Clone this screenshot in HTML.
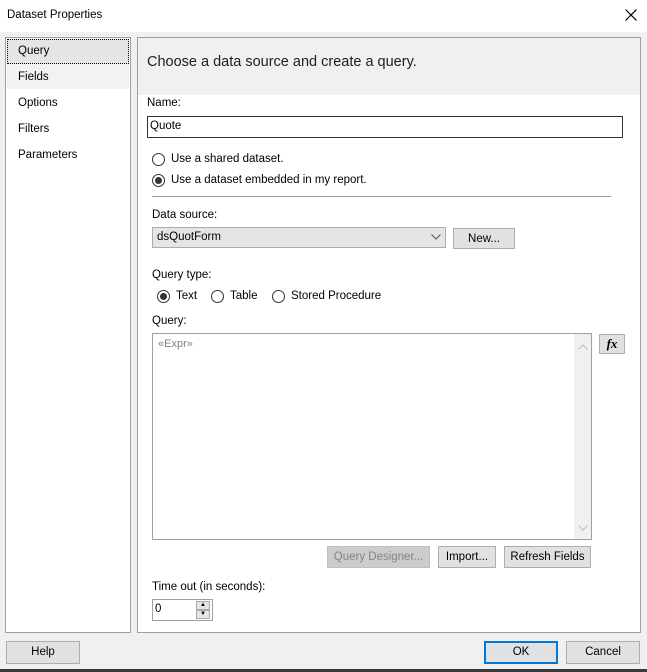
<!DOCTYPE html><html><head><style>
*{box-sizing:border-box}
body{margin:0;width:647px;height:672px;background:#f0f0f0;font-family:"Liberation Sans",sans-serif;font-size:11.5px;color:#000;position:relative;overflow:hidden}
.a{position:absolute}
.btn{position:absolute;background:#e1e1e1;border:1px solid #adadad;text-align:center;line-height:20px;font-size:11.5px}
.rad{position:absolute;width:13px;height:13px;border:1px solid #333;border-radius:50%;background:#fff}
.rad.on::after{content:"";position:absolute;left:2px;top:2px;width:7px;height:7px;border-radius:50%;background:#333}
</style></head><body>
<div class="a" style="left:0;top:0;width:647px;height:32px;background:#fff"></div>
<div class="a" style="left:7px;top:9px">Dataset Properties</div>
<svg class="a" style="left:625px;top:9px" width="12" height="12"><path d="M0.5 0.5L11.5 11.5M11.5 0.5L0.5 11.5" stroke="#000" stroke-width="1.2"/></svg>

<div class="a" style="left:5px;top:37px;width:126px;height:596px;background:#fff;border:1px solid #a0a0a0"></div>
<div class="a" style="left:7px;top:39px;width:122px;height:25px;background:#e5e5e5;border:1px dotted #000"></div>
<div class="a" style="left:7px;top:64px;width:122px;height:25px;background:#f2f2f2"></div>
<div class="a" style="left:18px;top:45px">Query</div>
<div class="a" style="left:18px;top:71px">Fields</div>
<div class="a" style="left:18px;top:97px">Options</div>
<div class="a" style="left:18px;top:123px">Filters</div>
<div class="a" style="left:18px;top:149px">Parameters</div>

<div class="a" style="left:137px;top:37px;width:504px;height:596px;background:#fff;border:1px solid #a0a0a0"></div>
<div class="a" style="left:138px;top:38px;width:502px;height:57px;background:#f0f0f0"></div>
<div class="a" style="left:147px;top:54px;font-size:14.5px;color:#1e1e1e">Choose a data source and create a query.</div>
<div class="a" style="left:147px;top:97px">Name:</div>
<div class="a" style="left:147px;top:116px;width:476px;height:22px;border:1px solid #333;padding:3px 2px">Quote</div>
<div class="rad" style="left:152px;top:153px"></div><div class="a" style="left:171px;top:153px">Use a shared dataset.</div>
<div class="rad on" style="left:152px;top:174px"></div><div class="a" style="left:171px;top:174px">Use a dataset embedded in my report.</div>
<div class="a" style="left:152px;top:196px;width:459px;height:1px;background:#a0a0a0"></div>
<div class="a" style="left:152px;top:209px">Data source:</div>
<div class="a" style="left:152px;top:227px;width:294px;height:21px;background:#e5e5e5;border:1px solid #adadad;padding:3px 4px">dsQuotForm</div>
<svg class="a" style="left:431px;top:234px" width="10" height="6"><path d="M0.5 0.5L5 5L9.5 0.5" stroke="#555" fill="none"/></svg>
<div class="btn" style="left:453px;top:228px;width:62px;height:21px">New...</div>
<div class="a" style="left:152px;top:269px">Query type:</div>
<div class="rad on" style="left:157px;top:290px"></div><div class="a" style="left:176px;top:290px">Text</div>
<div class="rad" style="left:211px;top:290px"></div><div class="a" style="left:230px;top:290px">Table</div>
<div class="rad" style="left:272px;top:290px"></div><div class="a" style="left:291px;top:290px">Stored Procedure</div>
<div class="a" style="left:152px;top:315px">Query:</div>
<div class="a" style="left:152px;top:333px;width:440px;height:207px;border:1px solid #a0a0a0"></div>
<div class="a" style="left:574px;top:334px;width:17px;height:205px;background:#f0f0f0"></div>
<svg class="a" style="left:578px;top:344px" width="10" height="6"><path d="M0.5 5.5L5 1L9.5 5.5" stroke="#bbb" fill="none"/></svg>
<svg class="a" style="left:578px;top:525px" width="10" height="6"><path d="M0.5 0.5L5 5L9.5 0.5" stroke="#bbb" fill="none"/></svg>
<div class="a" style="left:158px;top:338px;color:#808080;font-size:11px">«Expr»</div>
<div class="btn" style="left:599px;top:334px;width:26px;height:20px;font-family:'Liberation Serif',serif;font-style:italic;font-weight:bold;font-size:13px;line-height:17px">fx</div>
<div class="btn" style="left:327px;top:546px;width:103px;height:22px;background:#cccccc;border-color:#bfbfbf;color:#838383">Query Designer...</div>
<div class="btn" style="left:438px;top:546px;width:58px;height:22px">Import...</div>
<div class="btn" style="left:504px;top:546px;width:87px;height:22px">Refresh Fields</div>
<div class="a" style="left:152px;top:581px">Time out (in seconds):</div>
<div class="a" style="left:152px;top:599px;width:61px;height:22px;border:1px solid #a0a0a0;padding:3px 2px">0</div>
<div class="a" style="left:196px;top:601px;width:14px;height:9px;background:#e5e5e5;border:1px solid #aaa;font-size:6px;text-align:center;line-height:7px">▲</div>
<div class="a" style="left:196px;top:610px;width:14px;height:9px;background:#e5e5e5;border:1px solid #aaa;font-size:6px;text-align:center;line-height:7px">▼</div>

<div class="btn" style="left:6px;top:641px;width:74px;height:23px">Help</div>
<div class="btn" style="left:484px;top:641px;width:74px;height:23px;border:2px solid #0078d7;line-height:19px">OK</div>
<div class="btn" style="left:566px;top:641px;width:74px;height:23px">Cancel</div>
<div class="a" style="left:0;top:669px;width:647px;height:3px;background:#3a3a3a"></div>
</body></html>
